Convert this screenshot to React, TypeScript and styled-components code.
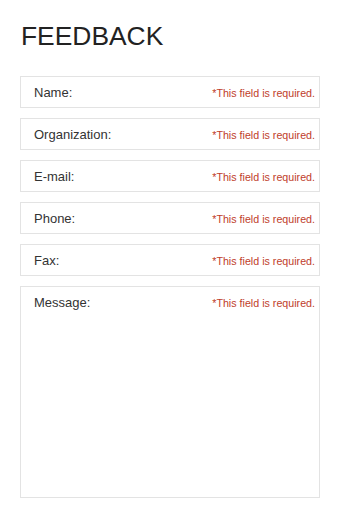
import styled, { createGlobalStyle } from "styled-components";

const GlobalStyle = createGlobalStyle`
  html, body {
    margin: 0;
    padding: 0;
    background: #ffffff;
  }
  body {
    font-family: "Liberation Sans", Arial, sans-serif;
  }
`;

const fields = ["Name:", "Organization:", "E-mail:", "Phone:", "Fax:"];

const App = (): JSX.Element => {
  return (
    <>
      <GlobalStyle />
      <Page>
        <Title>FEEDBACK</Title>
        <Form>
          {fields.map((label) => (
            <Field key={label}>
              <Label>{label}</Label>
              <Required>*This field is required.</Required>
            </Field>
          ))}
          <Field $tall>
            <Label>Message:</Label>
            <Required>*This field is required.</Required>
          </Field>
        </Form>
      </Page>
    </>
  );
};

export default App;

const Page = styled.main`
  width: 300px;
  padding: 23px 0 0 20px;
`;

const Title = styled.h1`
  margin: 0 0 27px 1px;
  font-size: 26.4px;
  line-height: 26px;
  font-weight: 400;
  color: #222222;
`;

const Form = styled.div`
  display: flex;
  flex-direction: column;
  gap: 10px;
`;

const Field = styled.div<{ $tall?: boolean }>`
  display: flex;
  justify-content: space-between;
  align-items: baseline;
  height: ${({ $tall }) => ($tall ? "210px" : "30px")};
  box-sizing: content-box;
  border: 1px solid #e3e3e3;
  background: #ffffff;
`;

const Label = styled.span`
  padding: 8px 0 0 13px;
  font-size: 13px;
  line-height: 15px;
  color: #333333;
`;

const Required = styled.span`
  padding-right: 4px;
  font-size: 10.7px;
  line-height: 15px;
  color: #c0402b;
`;
